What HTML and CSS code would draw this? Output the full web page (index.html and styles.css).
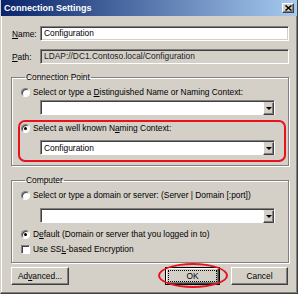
FILE: index.html
```html
<!DOCTYPE html>
<html>
<head>
<meta charset="utf-8">
<link rel="stylesheet" href="styles.css">
</head>
<body>
<div class="window">
  <div class="titlebar">
    <span class="title">Connection Settings</span>
    <span class="close"><svg width="7" height="6" viewBox="0 0 7 6"><path d="M0.5 0.5 L6.5 5.5 M6.5 0.5 L0.5 5.5" stroke="#000" stroke-width="1.5"/></svg></span>
  </div>
  <div class="content">
    <div class="row">
      <span class="lbl"><u>N</u>ame:</span>
      <div class="field">Configuration</div>
    </div>
    <div class="row row-path">
      <span class="lbl"><u>P</u>ath:</span>
      <div class="field ro">LDAP://DC1.Contoso.local/Configuration</div>
    </div>
    <fieldset class="group g1">
      <legend>Connection Point</legend>
      <div class="opt"><span class="radio"></span><span>Select or type a <u>D</u>istinguished Name or Naming Context:</span></div>
      <div class="combo c1"><div class="combo-text"></div><div class="drop"><span class="tri"></span></div></div>
      <div class="opt o2"><span class="radio checked"></span><span>Select a well known N<u>a</u>ming Context:</span></div>
      <div class="combo c2"><div class="combo-text">Configuration</div><div class="drop"><span class="tri"></span></div></div>
    </fieldset>
    <fieldset class="group g2">
      <legend>Computer</legend>
      <div class="opt"><span class="radio"></span><span>Select or type a domain or server: (Server | Domain [:port])</span></div>
      <div class="combo c3"><div class="combo-text"></div><div class="drop"><span class="tri"></span></div></div>
      <div class="opt o4"><span class="radio checked"></span><span>D<u>e</u>fault (Domain or server that you logged in to)</span></div>
      <div class="opt o5"><span class="check"></span><span>Use SS<u>L</u>-based Encryption</span></div>
    </fieldset>
    <div class="buttons">
      <div class="btn adv">Ad<u>v</u>anced...</div>
      <div class="spacer"></div>
      <div class="btn ok"><span class="focus">OK</span></div>
      <div class="btn cancel">Cancel</div>
    </div>
  </div>
  <div class="hl-rect"></div>
  <div class="hl-ellipse"></div>
</div>
</body>
</html>
```
FILE: styles.css
```css
html, body {
  margin: 0;
  padding: 0;
  background: #ffffff;
}
body {
  width: 300px;
  height: 297px;
  overflow: hidden;
  font-family: "Liberation Sans", Arial, sans-serif;
  font-size: 8.4px;
  color: #000;
}
u { text-decoration: underline; text-underline-offset: 1px; }
.window {
  position: relative;
  box-sizing: border-box;
  width: 298px;
  height: 294px;
  background: #d4d0c8;
  border: 1px solid;
  border-top: 0;
  border-color: #d4d0c8 #404040 #404040 #d4d0c8;
  box-shadow: inset -1px -1px #808080, inset 1px 0 #fff;
}
.titlebar {
  height: 16px;
  display: flex;
  align-items: center;
  padding: 0 3px 0 3px;
  background: linear-gradient(to right, #0a246a, #a6caf0);
}
.title {
  flex: 1;
  color: #fff;
  font-weight: bold;
  font-size: 9px;
}
.close {
  box-sizing: border-box;
  width: 12px;
  height: 10px;
  display: flex;
  align-items: center;
  justify-content: center;
  background: #d4d0c8;
  border: 1px solid;
  border-color: #fff #404040 #404040 #fff;
  box-shadow: inset -1px -1px #808080;
}
.content {
  padding: 10px 8px 0 10px;
}
.row {
  display: flex;
  align-items: center;
  height: 15px;
}
.row-path { margin-top: 8px; }
.lbl {
  width: 29px;
  padding-left: 1px;
  box-sizing: border-box;
}
.field {
  flex: 1;
  box-sizing: border-box;
  height: 15px;
  background: #fff;
  border: 1px solid;
  border-color: #808080 #fff #fff #808080;
  box-shadow: inset 1px 1px #404040, inset -1px -1px #d4d0c8;
  padding: 0 3px;
  line-height: 13px;
  white-space: nowrap;
  overflow: hidden;
}
.field.ro { background: #d4d0c8; color: #222; }
.group {
  margin: 0;
  min-width: 0;
  border: 1px solid #808080;
  box-shadow: inset 1px 1px #fff, 1px 1px #fff;
  padding: 0 13px 0 9px;
}
.group legend {
  padding: 0 1px;
  margin-left: 4px;
  line-height: 11px;
  font-size: 8.4px;
}
.g1 { margin-top: 8px; padding-top: 3px; padding-bottom: 10px; }
.g2 { margin-top: 9px; padding-top: 3px; padding-bottom: 7px; }
.opt {
  display: flex;
  align-items: center;
  height: 12px;
  white-space: nowrap;
}
.radio {
  box-sizing: border-box;
  width: 9px;
  height: 9px;
  margin-right: 3px;
  border-radius: 50%;
  background: #fff;
  border: 1px solid;
  border-color: #808080 #fff #fff #808080;
  box-shadow: inset 1px 1px #404040;
  position: relative;
  flex: none;
}
.radio.checked::after {
  content: "";
  position: absolute;
  left: 2px;
  top: 2px;
  width: 3px;
  height: 3px;
  border-radius: 50%;
  background: #000;
}
.check {
  box-sizing: border-box;
  width: 9px;
  height: 9px;
  margin-right: 3px;
  background: #fff;
  border: 1px solid;
  border-color: #808080 #fff #fff #808080;
  box-shadow: inset 1px 1px #404040;
  flex: none;
}
.combo {
  display: flex;
  box-sizing: border-box;
  height: 15px;
  margin-left: 19px;
  background: #fff;
  border: 1px solid;
  border-color: #808080 #fff #fff #808080;
  box-shadow: inset 1px 1px #404040;
  padding: 1px 0 0 1px;
}
.c1 { margin-top: 2px; }
.o2 { margin-top: 7px; }
.c2 { margin-top: 6px; }
.c3 { margin-top: 7px; }
.o4 { margin-top: 5px; }
.o5 { margin-top: 3px; }
.combo-text {
  flex: 1;
  padding-left: 2px;
  line-height: 12px;
}
.drop {
  box-sizing: border-box;
  width: 11px;
  height: 13px;
  background: #d4d0c8;
  border: 1px solid;
  border-color: #d4d0c8 #404040 #404040 #fff;
  box-shadow: inset -1px -1px #808080;
  display: flex;
  align-items: center;
  justify-content: center;
}
.tri {
  width: 0;
  height: 0;
  border-left: 3px solid transparent;
  border-right: 3px solid transparent;
  border-top: 3px solid #000;
}
.buttons {
  display: flex;
  margin-top: 4px;
  margin-right: 1px;
}
.spacer { flex: 1; }
.btn {
  box-sizing: border-box;
  height: 18px;
  display: flex;
  align-items: center;
  justify-content: center;
  background: #d4d0c8;
  border: 1px solid;
  border-color: #fff #404040 #404040 #fff;
  box-shadow: inset -1px -1px #808080;
}
.adv { width: 58px; }
.ok {
  width: 55px;
  border-color: #000;
  box-shadow: inset 1px 1px #fff, inset -1px -1px #404040, inset -2px -2px #808080;
  padding: 2px;
}
.ok .focus {
  box-sizing: border-box;
  width: 100%;
  height: 100%;
  border: 1px dotted #000;
  display: flex;
  align-items: center;
  justify-content: center;
}
.cancel { width: 57px; margin-left: 11px; }
.hl-rect {
  position: absolute;
  left: 17px;
  top: 120px;
  width: 268px;
  height: 42px;
  box-sizing: border-box;
  border: 2px solid #e8121e;
  border-radius: 7px;
}
.hl-ellipse {
  position: absolute;
  left: 157px;
  top: 263px;
  width: 70px;
  height: 25px;
  box-sizing: border-box;
  border: 2px solid #e8121e;
  border-radius: 50%;
}
```
